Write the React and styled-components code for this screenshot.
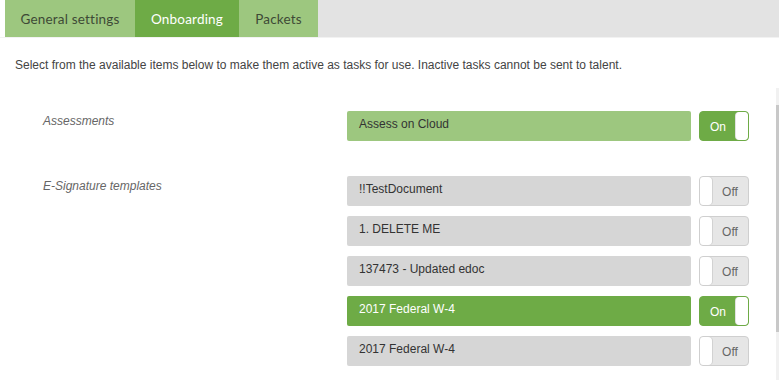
import React, { useState } from 'react';
import styled, { createGlobalStyle } from 'styled-components';

const GlobalStyle = createGlobalStyle`
  html, body {
    margin: 0;
    padding: 0;
    background: #fff;
  }
  body {
    font-family: 'Liberation Sans', Arial, sans-serif;
  }
`;

const Page = styled.div`
  width: 779px;
  height: 380px;
  overflow: hidden;
  display: flex;
  flex-direction: column;
`;

const TabBar = styled.div`
  display: flex;
  height: 37px;
  padding-left: 5px;
  border-bottom: 1px solid #f2f2f2;
`;

const Tab = styled.div`
  display: flex;
  align-items: center;
  justify-content: center;
  width: ${(p) => p.width}px;
  background: ${(p) => (p.active ? '#6eab46' : '#9dc77f')};
  color: ${(p) => (p.active ? '#ffffff' : '#3d4a36')};
  font-family: 'Lato', 'Open Sans', sans-serif;
  font-size: 13.5px;
  letter-spacing: 0.2px;
  cursor: pointer;
`;

const TabFill = styled.div`
  flex: 1;
  background: #e3e3e3;
`;

const Body = styled.div`
  flex: 1;
  display: flex;
`;

const Main = styled.div`
  flex: 1;
  padding: 20px 0 0 15px;
`;

const Intro = styled.p`
  margin: 0;
  font-size: 12px;
  color: #444;
  line-height: 15px;
`;

const Section = styled.div`
  display: flex;
  margin-top: ${(p) => p.gap}px;
`;

const Label = styled.div`
  width: 304px;
  padding: 3px 0 0 28px;
  font-size: 12px;
  font-style: italic;
  color: #666;
`;

const Items = styled.div`
  display: flex;
  flex-direction: column;
  gap: 10px;
`;

const Row = styled.div`
  display: flex;
  gap: 8px;
`;

const Bar = styled.div`
  width: 344px;
  height: 30px;
  box-sizing: border-box;
  padding: 6px 0 0 12px;
  border-radius: 2px;
  font-size: 12px;
  background: ${(p) => (p.on ? (p.strong ? '#6eab46' : '#9dc77f') : '#d6d6d6')};
  color: ${(p) => (p.on && p.strong ? '#fff' : '#333')};
`;

const Toggle = styled.button`
  width: 50px;
  height: 30px;
  padding: 0;
  box-sizing: border-box;
  display: flex;
  flex-direction: ${(p) => (p.on ? 'row' : 'row-reverse')};
  border: 1px solid ${(p) => (p.on ? '#6eab46' : '#cfcfcf')};
  border-radius: 4px;
  overflow: hidden;
  background: ${(p) => (p.on ? '#6eab46' : '#e6e6e6')};
  cursor: pointer;
`;

const ToggleText = styled.span`
  flex: 1;
  display: flex;
  align-items: center;
  justify-content: center;
  padding-top: 1px;
  font-family: 'Liberation Sans', Arial, sans-serif;
  font-size: 12px;
  color: ${(p) => (p.on ? '#fff' : '#666')};
`;

const Knob = styled.span`
  width: 12px;
  background: #fff;
  border-radius: ${(p) => (p.on ? '4px 3px 3px 4px' : '3px 4px 4px 3px')};
  box-shadow: ${(p) => (p.on ? '-1px 0 0 #e2e2e2' : '1px 0 0 #d2d2d2')};
`;

const ScrollTrack = styled.div`
  width: 3px;
  margin-top: 50px;
  background: #f1f1f1;
  display: flex;
  flex-direction: column;
`;

const ScrollThumb = styled.div`
  margin-top: 17px;
  height: 227px;
  background: #c8c8c8;
`;

const tabs = [
  { name: 'General settings', width: 130 },
  { name: 'Onboarding', width: 104, active: true },
  { name: 'Packets', width: 79 },
];

const sections = [
  {
    label: 'Assessments',
    gap: 38,
    items: [{ name: 'Assess on Cloud', on: true }],
  },
  {
    label: 'E-Signature templates',
    gap: 35,
    items: [
      { name: '!!TestDocument', on: false },
      { name: '1. DELETE ME', on: false },
      { name: '137473 - Updated edoc', on: false },
      { name: '2017 Federal W-4', on: true, strong: true },
      { name: '2017 Federal W-4', on: false },
    ],
  },
];

const Switch = ({ on, onClick }) => (
  <Toggle on={on} onClick={onClick}>
    <ToggleText on={on}>{on ? 'On' : 'Off'}</ToggleText>
    <Knob on={on} />
  </Toggle>
);

const App = () => {
  const [data, setData] = useState(sections);

  const flip = (s, i) => {
    setData(
      data.map((sec, si) =>
        si !== s
          ? sec
          : { ...sec, items: sec.items.map((it, ii) => (ii === i ? { ...it, on: !it.on } : it)) }
      )
    );
  };

  return (
    <Page>
      <GlobalStyle />
      <TabBar>
        {tabs.map((t) => (
          <Tab key={t.name} width={t.width} active={t.active}>
            {t.name}
          </Tab>
        ))}
        <TabFill />
      </TabBar>
      <Body>
        <Main>
          <Intro>
            Select from the available items below to make them active as tasks for use. Inactive tasks cannot be sent to talent.
          </Intro>
          {data.map((sec, s) => (
            <Section key={sec.label} gap={sec.gap}>
              <Label>{sec.label}</Label>
              <Items>
                {sec.items.map((it, i) => (
                  <Row key={i}>
                    <Bar on={it.on} strong={it.strong || s === 1}>
                      {it.name}
                    </Bar>
                    <Switch on={it.on} onClick={() => flip(s, i)} />
                  </Row>
                ))}
              </Items>
            </Section>
          ))}
        </Main>
        <ScrollTrack>
          <ScrollThumb />
        </ScrollTrack>
      </Body>
    </Page>
  );
};

export default App;
